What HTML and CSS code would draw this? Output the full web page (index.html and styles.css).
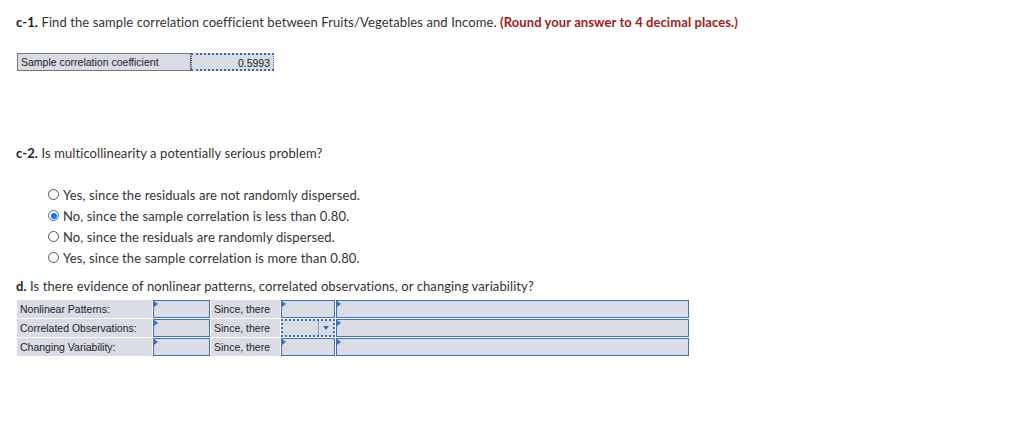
FILE: index.html
```html
<!DOCTYPE html>
<html>
<head>
<meta charset="utf-8">
<link rel="stylesheet" href="styles.css">
</head>
<body>
<div class="page">
  <p class="q q1"><b>c-1.</b> Find the sample correlation coefficient between Fruits/Vegetables and Income. <span class="red">(Round your answer to 4 decimal places.)</span></p>

  <div class="t1">
    <div class="t1-label">Sample correlation coefficient</div>
    <div class="t1-val">0.5993</div>
  </div>

  <p class="q q2"><b>c-2.</b> Is multicollinearity a potentially serious problem?</p>

  <div class="radios">
    <div class="opt"><span class="radio"></span>Yes, since the residuals are not randomly dispersed.</div>
    <div class="opt"><span class="radio on"></span>No, since the sample correlation is less than 0.80.</div>
    <div class="opt"><span class="radio"></span>No, since the residuals are randomly dispersed.</div>
    <div class="opt"><span class="radio"></span>Yes, since the sample correlation is more than 0.80.</div>
  </div>

  <p class="q q3"><b>d.</b> Is there evidence of nonlinear patterns, correlated observations, or changing variability?</p>

  <div class="t2">
    <div class="c lab">Nonlinear Patterns:</div>
    <div class="c inp flag"></div>
    <div class="c lab">Since, there</div>
    <div class="c inp flag"></div>
    <div class="c inp flag"></div>

    <div class="c lab">Correlated Observations:</div>
    <div class="c inp flag"></div>
    <div class="c lab">Since, there</div>
    <div class="c sel"><span class="sel-arrow"></span></div>
    <div class="c inp flag"></div>

    <div class="c lab">Changing Variability:</div>
    <div class="c inp flag"></div>
    <div class="c lab">Since, there</div>
    <div class="c inp flag"></div>
    <div class="c inp flag"></div>
  </div>
</div>
</body>
</html>
```

FILE: styles.css
```css
* { box-sizing: border-box; }
body {
  margin: 0;
  background: #fff;
  font-family: Lato, "Open Sans", sans-serif;
  color: #333;
}
.page {
  padding: 0 0 0 16px;
}
.q {
  margin: 0;
  font-size: 13px;
  line-height: 16px;
  letter-spacing: 0.09px;
}
.q b { font-weight: 700; color: #222; }
.q1 { padding-top: 14px; }
.red { color: #a0211c; font-weight: 700; }

.t1 {
  display: flex;
  margin-top: 23px;
  margin-left: 1px;
  font-family: "Liberation Sans", Arial, sans-serif;
  font-size: 10.5px;
  color: #222;
}
.t1-label {
  width: 174px;
  height: 18px;
  background: #d9dce4;
  border: 1px solid #777;
  padding: 2px 3px;
  line-height: 12px;
}
.t1-val {
  width: 83px;
  height: 18px;
  background: #d9dce4;
  border: 1px dotted #3a66b0;
  border-width: 2px 1px;
  text-align: right;
  padding: 1px 3px;
  line-height: 14px;
}

.q2 { margin-top: 74px; }

.radios {
  margin-top: 23px;
  margin-left: 32px;
  font-size: 13px;
  letter-spacing: 0.12px;
}
.opt {
  display: flex;
  align-items: center;
  height: 21px;
}
.radio {
  width: 11px;
  height: 11px;
  border: 1px solid #555;
  border-radius: 50%;
  margin-right: 4px;
  background: #fff;
  position: relative;
}
.radio.on {
  border-color: #1a73e8;
}
.radio.on::after {
  content: "";
  position: absolute;
  left: 1.5px;
  top: 1.5px;
  width: 6px;
  height: 6px;
  border-radius: 50%;
  background: #1a73e8;
}

.q3 { margin-top: 10px; }

.t2 {
  display: grid;
  grid-template-columns: 135px 57px 69px 54px 353px;
  grid-auto-rows: 18px;
  gap: 1px 1px;
  margin-top: 6px;
  margin-left: 1px;
  font-family: "Liberation Sans", Arial, sans-serif;
  font-size: 10.5px;
  color: #222;
}
.c {
  background: #d9dce4;
}
.lab {
  padding: 3px 3px;
  line-height: 12px;
}
.inp {
  border: 1px solid #3f6fb6;
  position: relative;
}
.flag::before {
  content: "";
  position: absolute;
  left: 0;
  top: 0;
  width: 0;
  height: 0;
  border-left: 4px solid #3f6fb6;
  border-top: 3px solid transparent;
  border-bottom: 3px solid transparent;
}
.sel {
  border: 2px dotted #3f6fb6;
  position: relative;
  display: flex;
  justify-content: flex-end;
}
.sel-arrow {
  width: 15px;
  border-left: 1px solid #8aa3c8;
  position: relative;
}
.sel-arrow::after {
  content: "";
  position: absolute;
  left: 4px;
  top: 5px;
  border-top: 4px solid #3f6fb6;
  border-left: 3.5px solid transparent;
  border-right: 3.5px solid transparent;
}
```
